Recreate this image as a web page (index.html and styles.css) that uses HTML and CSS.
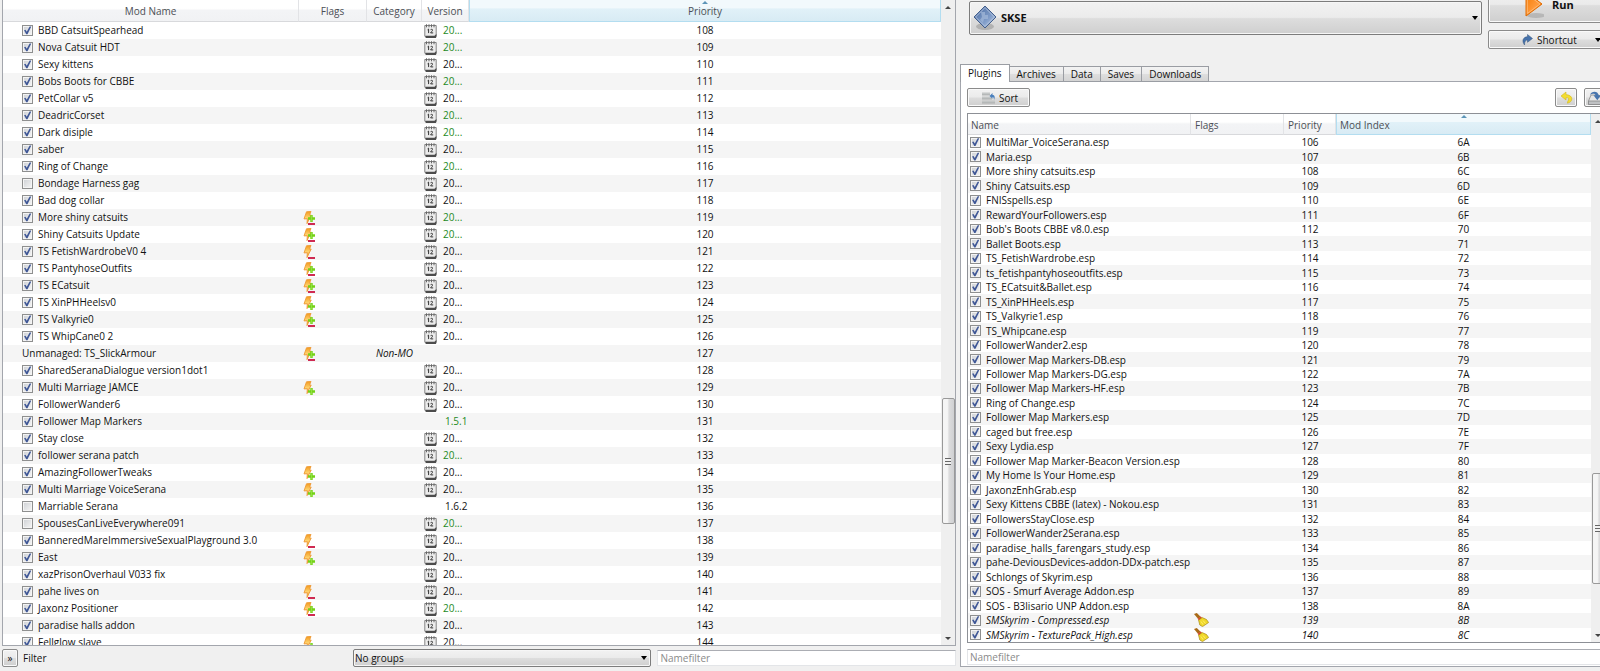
FILE: index.html
```html
<!DOCTYPE html>
<html lang="en">
<head>
<meta charset="utf-8">
<title>Mod Organizer</title>
<link rel="stylesheet" href="styles.css">
</head>
<body>
<svg class="defs" width="0" height="0" aria-hidden="true">
  <defs>
    <linearGradient id="g-bolt" x1="0" y1="0" x2="0" y2="1"><stop offset="0" stop-color="#f39a1e"/><stop offset=".5" stop-color="#fdd06a"/><stop offset="1" stop-color="#f08a1c"/></linearGradient>
    <linearGradient id="g-play" x1="0" y1="0" x2="1" y2="1"><stop offset="0" stop-color="#f57900"/><stop offset=".6" stop-color="#ff9a3c"/><stop offset="1" stop-color="#f57900"/></linearGradient>
    <linearGradient id="g-dia" x1="0" y1="0" x2="1" y2="1"><stop offset="0" stop-color="#48699f"/><stop offset=".6" stop-color="#7f9cc8"/><stop offset="1" stop-color="#c5d3e8"/></linearGradient>
    <symbol id="bolt" viewBox="0 0 13 14"><path d="M3.500.800 8 .4 6.500 4.200 8.200 4 4 12.600 4.300 7.800 1 7.900Z" fill="url(#g-bolt)" stroke="#ee9a36" stroke-width=".9"/></symbol>
    <symbol id="plus" viewBox="0 0 7 7"><path d="M2.300 0h2.400v2.300H7v2.400H4.700V7H2.300V4.700H0V2.300h2.300Z" fill="#73d216"/><path d="M3 .5h.8v6H3Z" fill="#9be24c"/></symbol>
    <symbol id="calendar" viewBox="0 0 13 14"><path d="M.8 1.500h11.400v10.500l-1 1.200H1.800L.8 12Z" fill="#ececec" stroke="#777" stroke-width=".9"/><path d="M1.300 11.800h9.200L12.400 10v3l-.6.900H1.800Z" fill="#4c4c4c"/><path d="M2.500.3v3M5 .3v3M7.500.3v3M10 .3v3" stroke="#666" stroke-width="1"/><path d="M3.600 5.800l1-.7v4M6.600 5.700c2-1.200 2.600.6 1 1.900L6.600 8.900h2.600" fill="none" stroke="#333" stroke-width="1"/></symbol>
    <symbol id="broom" viewBox="0 0 15 14"><path d="M0 1 2.800 0 6.800 4 4 5.800Z" fill="#a96a18"/><path d="M3.600 5.800 6.800 3.500 8.200 5 5 7.400Z" fill="#d7442c"/><path d="M4.600 7.200 8.200 4.600 12.500 6.500 14.600 9.500 8.500 13.600 5.800 12Z" fill="#f0d829" stroke="#a88a16" stroke-width=".7"/><path d="M7 8.500 9 11.500M9 7.500l2.500 3" stroke="#fff27c" stroke-width=".8"/></symbol>
  </defs>
</svg>
<main class="app">
  <section class="mods" aria-label="Mods">
    <div class="list-frame">
      <div class="list-view">
        <table class="mod-table">
          <colgroup><col class="c-name"><col class="c-flags"><col class="c-cat"><col class="c-ver"><col></colgroup>
          <thead><tr><th>Mod Name</th><th>Flags</th><th>Category</th><th>Version</th><th class="sorted">Priority</th></tr></thead>
          <tbody id="mod-rows"></tbody>
        </table>
      </div>
      <div class="scroll scroll-mods"><span class="up"></span><span class="thumb"><i></i></span><span class="down"></span></div>
    </div>
    <div class="filter-bar">
      <button class="btn expand" type="button" aria-label="Show filters">»</button>
      <span class="filter-title">Filter</span>
      <span class="combo group-combo"><select aria-label="Grouping"><option>No groups</option></select></span>
      <input class="namefilter" type="text" placeholder="Namefilter" aria-label="Filter mods by name">
    </div>
  </section>
  <section class="side" aria-label="Profile">
    <div class="launch">
      <span class="combo exe-combo">
        <svg class="exe-icon" width="24" height="26" viewBox="0 0 24 26"><ellipse cx="12" cy="21.500" rx="9" ry="3.500" fill="#999" opacity=".6"/><path d="M12 1 23 12 12 23 1 12Z" fill="url(#g-dia)" stroke="#435f8c" stroke-width="1"/><path d="M12 2.600 21.400 12 12 21.400 2.600 12Z" fill="none" stroke="#b9c8df" stroke-width=".8"/><path d="M8 7h4v3h3v4h-4l-1 4-3-3 2-3Z" fill="#9eb4d6" opacity=".8"/></svg>
        <select aria-label="Executable"><option>SKSE</option></select>
      </span>
      <div class="launch-buttons">
        <button class="btn run" type="button"><svg width="19" height="28" viewBox="0 0 19 28"><ellipse cx="11" cy="24.500" rx="9" ry="2.500" fill="#999" opacity=".5"/><path d="M1 1 17 13 1 25Z" fill="url(#g-play)" stroke="#e06a00"/><path d="M2.300 3.500 15 13 2.300 22.500Z" fill="none" stroke="#ffc080" stroke-width=".8"/></svg>Run</button>
        <button class="btn shortcut" type="button"><svg width="11" height="12" viewBox="0 0 11 12"><path d="M2.500 11C-.5 7 1 2.800 5.500 2.800V.5L10.500 4.500 5.500 8.300V6C3.500 6 2.500 7.500 2.500 11Z" fill="#4672ab" stroke="#34557f" stroke-width=".5"/></svg>Shortcut<span class="caret"></span></button>
      </div>
    </div>
    <div class="tabs" role="tablist">
      <button class="tab active" role="tab" aria-selected="true" type="button">Plugins</button>
      <button class="tab" role="tab" type="button">Archives</button>
      <button class="tab" role="tab" type="button">Data</button>
      <button class="tab" role="tab" type="button">Saves</button>
      <button class="tab" role="tab" type="button">Downloads</button>
    </div>
    <div class="pane">
      <div class="tools">
        <button class="btn sort" type="button"><svg width="14" height="12" viewBox="0 0 14 12"><path d="M0 .5h8v2.500H0ZM0 4.500h10V7H0ZM0 8.500h13V11H0Z" fill="#c3c6c6"/><path d="M0 3h8M0 7h10M0 11h13" stroke="#9c9f9f" stroke-width=".7"/><path d="M12 8c1.500-3 .5-5-1.500-5V1L7.500 4l3 2.800V5c1 0 1.500 1 1.500 3Z" fill="#4a80bd"/></svg>Sort</button>
        <button class="btn tool" type="button" aria-label="Restore backup"><svg width="13" height="13" viewBox="0 0 13 13"><path d="M6 1 1 5l5 4V6.600c2.500-.3 3.500 1 1.500 4.400v1.200c5.500-1 6.500-8-1.500-8.600Z" fill="#f3dd30" stroke="#d2b71c" stroke-width=".6"/></svg></button>
        <button class="btn tool" type="button" aria-label="Create backup"><svg width="14" height="14" viewBox="0 0 14 14"><path d="M3 4h8l2.500 6v3.500H.5V10Z" fill="#e6e6e6" stroke="#888" stroke-width=".8"/><path d="M.5 10h13v3.500H.5Z" fill="#bfc1c3" stroke="#888" stroke-width=".8"/><path d="M2 4C3.500-.4 10-.2 10.500 4.200H13L9.300 9.200 5.500 4.200h2C7 2.400 4 2.400 2 4Z" fill="#4774ad"/></svg></button>
      </div>
      <div class="list-frame plugin-frame">
        <table class="plugin-table">
          <thead><tr><th>Name</th><th>Flags</th><th>Priority</th><th class="sorted">Mod Index</th></tr></thead>
          <tbody id="plugin-rows"></tbody>
        </table>
        <div class="scroll scroll-plugins"><span class="up"></span><span class="thumb"><i></i></span><span class="down"></span></div>
      </div>
      <input class="namefilter plugin-filter" type="text" placeholder="Namefilter" aria-label="Filter plugins by name">
    </div>
  </section>
</main>
<script src="app.js"></script>
</body>
</html>
```

FILE: styles.css
```css
* { box-sizing: border-box; }
body {
  margin: 0;
  background: #f0f0f0;
  color: #111;
  font: 10px/14px "Open Sans", "Noto Sans", sans-serif;
  overflow: hidden;
}
button, input, select { font: inherit; color: inherit; margin: 0; }
.defs { position: absolute; }
.app {
  display: grid;
  grid-template-columns: minmax(0, 3fr) minmax(0, 2fr);
  height: 100vh;
}

/* Mod list */
.mods { display: flex; flex-direction: column; min-height: 0; padding: 0 4px 4px 2px; }
.list-frame {
  display: flex;
  flex: 1;
  min-height: 0;
  background: #fff;
  border: 1px solid #a3a6ad;
}
.mods .list-frame { border-top: 0; }
.list-view { flex: 1; min-width: 0; overflow: hidden; }
table { border-collapse: separate; border-spacing: 0; width: 100%; }
.mod-table { table-layout: fixed; }
.c-name { width: 296px; }
.c-flags { width: 68px; }
.c-cat { width: 55px; }
.c-ver { width: 47px; }
th {
  position: relative;
  height: 21px;
  padding: 2px 0 0;
  font-weight: 400;
  color: #4c4f55;
  background: linear-gradient(#fff 40%, #f3f4f6 50%, #f1f2f4);
  border-right: 1px solid #e2e3e6;
  border-bottom: 1px solid #d8d9dc;
}
.mod-table th { height: 22px; padding-top: 1px; }
th.sorted {
  background: linear-gradient(#f2f9fc 38%, #e1f1f8 42%, #d8ebf4);
  border: solid #b3ddf0;
  border-width: 0 1px 1px;
}
th.sorted::before {
  content: "";
  position: absolute;
  top: 1px;
  left: calc(50% - 3px);
  border: 3px solid transparent;
  border-top: 0;
  border-bottom-color: #5c95b8;
}
td { padding: 0; white-space: nowrap; }
tbody tr:nth-child(even) { background: #f5f5f5; }
.mod-table td { height: 17px; line-height: 17px; }
td svg { display: block; }
td label { display: flex; align-items: center; gap: 5px; }
.mod-table .mod-name { padding-left: 19px; }
.mod-table .mod-flag { padding-left: 4px; }
.flag { position: relative; display: block; width: 12px; height: 14px; }
.flag .plus { position: absolute; right: 0; bottom: 0; }
.flag .minus { position: absolute; right: 0; bottom: 0; width: 7px; height: 2px; background: #cf2a52; }
.flag.both .plus { bottom: 3px; }
.center { text-align: center; }
.ver { display: flex; align-items: center; gap: 6px; padding-left: 2px; height: 17px; }
.ver.plain { padding-left: 23px; }
.new { color: #1d8a1d; }
.muted td { font-style: italic; }
.italic { font-style: italic; }

input[type="checkbox"] {
  appearance: none;
  flex: none;
  width: 11px;
  height: 11px;
  border: 1px solid #8e8f8f;
  background: linear-gradient(135deg, #cdd0d4, #f6f6f6);
  box-shadow: inset 0 0 0 1px #f4f4f4;
}
input[type="checkbox"]:checked::after {
  content: "";
  display: block;
  height: 9px;
  background: #3f5796;
  clip-path: polygon(12% 48%, 28% 42%, 42% 64%, 74% 6%, 92% 6%, 50% 92%, 36% 92%);
}

/* Scroll bars */
.scroll {
  display: grid;
  flex: none;
  width: 14px;
  justify-items: center;
  background: #efefef;
}
.scroll-mods { grid-template-rows: 398fr 126fr 121fr; }
.scroll-plugins { grid-template-rows: 360fr 111fr 58fr; }
.up, .down { border: 3px solid transparent; width: 0; height: 0; }
.up { margin-top: 6px; border-top: 0; border-bottom-color: #444; }
.down { align-self: end; margin-bottom: 5px; border-bottom: 0; border-top-color: #444; }
.thumb {
  display: grid;
  place-items: center;
  width: 13px;
  border: 1px solid #999;
  border-radius: 2px;
  background: linear-gradient(90deg, #f5f5f5 40%, #dcdcdd 55%, #cfd0d2);
}
.thumb i { width: 6px; height: 7px; background: repeating-linear-gradient(#666 0 1px, #f2f2f2 1px 3px); }

/* Controls */
.btn {
  display: flex;
  align-items: center;
  padding: 0;
  border: 1px solid #8b8b8b;
  border-radius: 2px;
  background: linear-gradient(#f2f2f2, #ebebeb 48%, #dddddd 52%, #cfcfcf);
  box-shadow: inset 0 0 0 1px #fafafa;
}
.combo { position: relative; display: block; }
.combo select {
  appearance: none;
  width: 100%;
  height: 100%;
  border: 1px solid #7c7c7c;
  border-radius: 2px;
  background: linear-gradient(#f2f2f2, #ebebeb 48%, #dddddd 52%, #cfcfcf);
  box-shadow: inset 0 0 0 1px #f6f6f6;
}
.combo::after, .caret {
  content: "";
  border: 3px solid transparent;
  border-top: 4px solid #000;
  border-bottom: 0;
}
.combo::after { position: absolute; right: 4px; top: calc(50% - 2px); pointer-events: none; }
.filter-bar { display: flex; align-items: center; padding-top: 3px; height: 21px; }
.expand { justify-content: center; width: 16px; height: 18px; }
.filter-title { flex: none; width: 330px; padding-left: 5px; }
.group-combo { flex: 100; height: 18px; margin: 0 6px 0 5px; }
.group-combo select { padding: 0 1px; }
.namefilter {
  flex: 98;
  min-width: 0;
  height: 16px;
  padding: 0 2px;
  border: 1px solid #e3e5e8;
  border-top-color: #abadb3;
  background: #fff;
}
.namefilter::placeholder { color: #8a8a8a; opacity: 1; }

/* Right side */
.side { display: flex; flex-direction: column; min-height: 0; margin-right: -6px; padding-bottom: 4px; }
.launch { display: flex; gap: 6px; height: 64px; padding-left: 9px; }
.exe-combo { flex: 1; height: 34px; margin-top: 1px; }
.exe-combo select { padding: 0 28px 0 31px; font-size: 11px; font-weight: 700; }
.exe-icon { position: absolute; left: 4px; top: 4px; pointer-events: none; }
.launch-buttons { width: 118px; }
.run { width: 100%; height: 36px; margin-top: -13px; padding: 0 0 0 36px; gap: 8px; font-size: 11px; font-weight: 700; }
.shortcut { width: 100%; height: 19px; margin-top: 7px; padding-left: 33px; gap: 4px; }
.caret { margin: 0 4px 0 auto; }
.tabs { display: flex; align-items: flex-end; height: 18px; margin-bottom: -1px; position: relative; }
.tab {
  height: 16px;
  padding: 0 7px;
  line-height: 13px;
  border: solid #9a9da3;
  border-width: 1px 1px 1px 0;
  background: linear-gradient(#f3f3f3, #ebebeb 48%, #dedede 52%, #d4d4d4);
}
.tab.active { height: 18px; border-width: 1px 1px 0; background: #fff; }
.pane {
  display: flex;
  flex: 1;
  flex-direction: column;
  min-height: 0;
  padding: 6px 0 1px 6px;
  background: #fff;
  border: 1px solid #a3a6ad;
}
.tools { display: flex; gap: 7px; height: 25px; flex: none; }
.sort { width: 63px; height: 19px; margin-right: auto; padding-left: 14px; gap: 3px; }
.tool { justify-content: center; width: 22px; height: 19px; }
.tool:last-child { margin-right: -1px; }
.plugin-frame { border-color: #8d9096; border-right: 0; }
.plugin-table { flex: 1; display: grid; grid-template: 21px 1fr / 223px 93px 52px 1fr; height: 100%; }
.plugin-table thead, .plugin-table tbody, .plugin-table tr { display: grid; grid-column: 1 / -1; grid-template-columns: subgrid; }
.plugin-table tbody { grid-auto-rows: minmax(0, 1fr); }
.plugin-table th { padding: 1px 0 0 4px; text-align: left; line-height: 20px; }
.plugin-table th:first-child, .plugin-table th.sorted { padding-left: 3px; }
.plugin-table td { display: grid; align-items: center; }
.plugin-table .plugin-name { padding-left: 2px; }
.plugin-table .plugin-flag { padding-left: 3px; }
.plugin-filter { flex: none; margin-top: 6px; border-right: 0; }
```

FILE: app.js
```js
// name | flags (+ overwrites, - overwritten) | version (n newer, o current) | enabled
const mods = [
  ["BBD CatsuitSpearhead", "", "n"], ["Nova Catsuit HDT", "", "n"], ["Sexy kittens", "", "o"],
  ["Bobs Boots for CBBE", "", "n"], ["PetCollar v5", "", "o"], ["DeadricCorset", "", "n"],
  ["Dark disiple", "", "n"], ["saber", "", "o"], ["Ring of Change", "", "n"],
  ["Bondage Harness gag", "", "o", false], ["Bad dog collar", "", "o"], ["More shiny catsuits", "+-", "n"],
  ["Shiny Catsuits Update", "+-", "n"], ["TS FetishWardrobeV0 4", "-", "o"], ["TS PantyhoseOutfits", "+-", "o"],
  ["TS ECatsuit", "+-", "o"], ["TS XinPHHeelsv0", "+", "o"], ["TS Valkyrie0", "+-", "o"],
  ["TS WhipCane0 2", "", "o"], ["Unmanaged: TS_SlickArmour", "+-", ""], ["SharedSeranaDialogue version1dot1", "", "o"],
  ["Multi Marriage JAMCE", "+", "o"], ["FollowerWander6", "", "o"], ["Follower Map Markers", "", "1.5.1"],
  ["Stay close", "", "o"], ["follower serana patch", "", "n"], ["AmazingFollowerTweaks", "+", "o"],
  ["Multi Marriage VoiceSerana", "+", "o"], ["Marriable Serana", "", "1.6.2", false], ["SpousesCanLiveEverywhere091", "", "n", false],
  ["BanneredMareImmersiveSexualPlayground 3.0", "-", "o"], ["East", "+", "o"], ["xazPrisonOverhaul V033 fix", "", "o"],
  ["pahe lives on", "-", "o"], ["Jaxonz Positioner", "+-", "n"], ["paradise halls addon", "", "o"], ["Fellglow slave", "+", "o"]
];
const plugins = [
  "MultiMar_VoiceSerana", "Maria", "More shiny catsuits", "Shiny Catsuits", "FNISspells", "RewardYourFollowers",
  "Bob's Boots CBBE v8.0", "Ballet Boots", "TS_FetishWardrobe", "ts_fetishpantyhoseoutfits", "TS_ECatsuit&amp;Ballet",
  "TS_XinPHHeels", "TS_Valkyrie1", "TS_Whipcane", "FollowerWander2", "Follower Map Markers-DB",
  "Follower Map Markers-DG", "Follower Map Markers-HF", "Ring of Change", "Follower Map Markers", "caged but free",
  "Sexy Lydia", "Follower Map Marker-Beacon Version", "My Home Is Your Home", "JaxonzEnhGrab",
  "Sexy Kittens CBBE (latex) - Nokou", "FollowersStayClose", "FollowerWander2Serana", "paradise_halls_farengars_study",
  "pahe-DeviousDevices-addon-DDx-patch", "Schlongs of Skyrim", "SOS - Smurf Average Addon", "SOS - B3lisario UNP Addon",
  "SMSkyrim - Compressed", "SMSkyrim - TexturePack_High"
];

function flagIcon(f) {
  if (!f) return "";
  const plus = f.includes("+") ? '<svg class="plus" width="7" height="7"><use href="#plus"/></svg>' : "";
  const minus = f.includes("-") ? '<span class="minus"></span>' : "";
  return `<span class="flag ${f.length > 1 ? "both" : ""}"><svg width="13" height="14"><use href="#bolt"/></svg>${plus}${minus}</span>`;
}

function version(v) {
  if (!v) return "";
  if (v.length > 1) return `<span class="ver plain ${v === "1.5.1" ? "new" : ""}">${v}</span>`;
  return `<span class="ver ${v === "n" ? "new" : ""}"><svg width="13" height="14"><use href="#calendar"/></svg>20...</span>`;
}

document.getElementById("mod-rows").innerHTML = mods.map(([name, flags, ver, on = true], i) => {
  const label = ver ? `<label><input type="checkbox" ${on ? "checked" : ""}>${name}</label>` : name;
  return `<tr><td class="mod-name">${label}</td><td class="mod-flag">${flagIcon(flags)}</td>` +
    `<td class="center italic">${ver ? "" : "Non-MO"}</td><td>${version(ver)}</td><td class="center">${108 + i}</td></tr>`;
}).join("");

document.getElementById("plugin-rows").innerHTML = plugins.map((name, i) => {
  const dirty = i > 32;
  return `<tr class="${dirty ? "muted" : ""}"><td class="plugin-name"><label><input type="checkbox" checked>${name}.esp</label></td>` +
    `<td class="plugin-flag">${dirty ? '<svg width="15" height="14"><use href="#broom"/></svg>' : ""}</td>` +
    `<td class="center">${106 + i}</td><td class="center">${(106 + i).toString(16).toUpperCase()}</td></tr>`;
}).join("");
```
